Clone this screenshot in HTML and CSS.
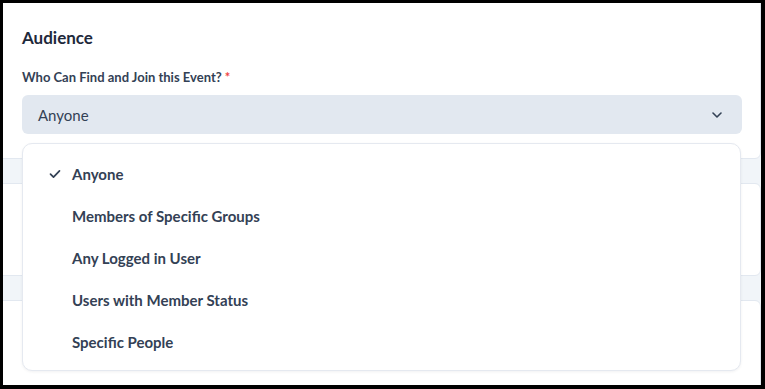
FILE: index.html
```html
<!DOCTYPE html>
<html>
<head>
<meta charset="utf-8">
<link rel="stylesheet" href="styles.css">
</head>
<body>
<div class="frame">
  <div class="page">
    <section class="card card-top">
      <h2 class="title">Audience</h2>
      <label class="label">Who Can Find and Join this Event? <span class="req">*</span></label>
      <div class="select">
        <span class="select-value">Anyone</span>
        <svg class="chevron" width="10" height="6" viewBox="0 0 10 6"><path d="M1 1l4 4 4-4" fill="none" stroke="#334155" stroke-width="1.6" stroke-linecap="round" stroke-linejoin="round"/></svg>
      </div>
    </section>
    <section class="card card-mid"></section>
    <section class="card card-bottom"></section>
    <ul class="menu">
      <li class="item selected">
        <svg class="check" width="12" height="10" viewBox="0 0 12 10"><path d="M1.5 5.2l3 3 6-6.4" fill="none" stroke="#334155" stroke-width="1.7" stroke-linecap="round" stroke-linejoin="round"/></svg>
        <span>Anyone</span>
      </li>
      <li class="item"><span>Members of Specific Groups</span></li>
      <li class="item"><span>Any Logged in User</span></li>
      <li class="item"><span>Users with Member Status</span></li>
      <li class="item"><span>Specific People</span></li>
    </ul>
  </div>
</div>
</body>
</html>
```

FILE: styles.css
```css
html, body {
  margin: 0;
  padding: 0;
}
body {
  font-family: Lato, "Noto Sans", sans-serif;
  color: #334155;
}
.frame {
  width: 765px;
  height: 389px;
  box-sizing: border-box;
  border-style: solid;
  border-color: #000;
  border-width: 3px 4px 4px 3px;
  overflow: hidden;
}
.page {
  position: relative;
  height: 100%;
  background: #f1f5f9;
  display: flex;
  flex-direction: column;
  gap: 24px;
}
.card {
  background: #fff;
  border: 1px solid #e2e8f0;
  border-radius: 6px;
  margin: 0 0 0 -8px;
  flex: none;
}
.card-top {
  margin-top: -8px;
  height: 164px;
  padding: 0 18px 0 26px;
  box-sizing: border-box;
}
.card-mid {
  height: 93px;
  box-sizing: border-box;
}
.card-bottom {
  height: 120px;
}
.title {
  margin: 32px 0 0;
  font-size: 17px;
  font-weight: 700;
  line-height: 20px;
  color: #1e293b;
}
.label {
  display: block;
  margin-top: 21px;
  font-size: 13px;
  font-weight: 700;
  line-height: 16px;
  color: #334155;
}
.req {
  color: #ef4444;
}
.select {
  margin-top: 10px;
  height: 39px;
  background: #e2e8f0;
  border-radius: 6px;
  display: flex;
  align-items: center;
  justify-content: space-between;
  padding: 0 20px 0 16px;
}
.select-value {
  font-size: 15px;
  color: #334155;
}
.menu {
  position: absolute;
  top: 140px;
  left: 19px;
  width: 719px;
  box-sizing: border-box;
  margin: 0;
  padding: 9px 0 7px;
  list-style: none;
  background: #fff;
  border: 1px solid #e5e9f0;
  border-radius: 10px;
  box-shadow: 0 1px 3px rgba(15, 23, 42, 0.06);
}
.item {
  height: 42px;
  display: flex;
  align-items: center;
  padding-left: 49px;
  position: relative;
  font-size: 15px;
  font-weight: 700;
  color: #334155;
}
.check {
  position: absolute;
  left: 26px;
  top: 16px;
}
```
